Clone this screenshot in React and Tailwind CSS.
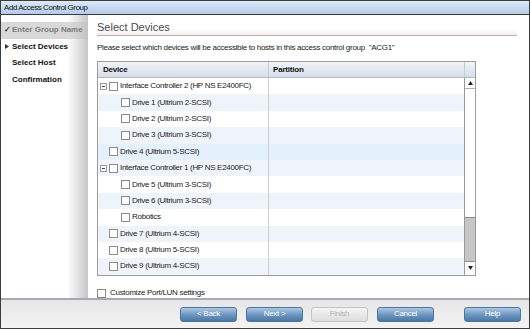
import React from "react";

const rows = [
  { label: "Interface Controller 2 (HP NS E2400FC)", level: 0 },
  { label: "Drive 1 (Ultrium 2-SCSI)", level: 2 },
  { label: "Drive 2 (Ultrium 2-SCSI)", level: 2 },
  { label: "Drive 3 (Ultrium 3-SCSI)", level: 2 },
  { label: "Drive 4 (Ultrium 5-SCSI)", level: 1 },
  { label: "Interface Controller 1 (HP NS E2400FC)", level: 0 },
  { label: "Drive 5 (Ultrium 3-SCSI)", level: 2 },
  { label: "Drive 6 (Ultrium 3-SCSI)", level: 2 },
  { label: "Robotics", level: 2 },
  { label: "Drive 7 (Ultrium 4-SCSI)", level: 1 },
  { label: "Drive 8 (Ultrium 5-SCSI)", level: 1 },
  { label: "Drive 9 (Ultrium 4-SCSI)", level: 1 },
];

function Box() {
  return <span className="inline-block w-[9px] h-[9px] border border-[#8c8c8c] bg-white shrink-0" />;
}

function Expander() {
  return (
    <span className="w-[7px] h-[7px] border border-[#9a9a9a] bg-white shrink-0 flex items-center justify-center mr-[2px]">
      <span className="block w-[3px] h-px bg-[#444]" />
    </span>
  );
}

function Btn({ children, disabled }) {
  return (
    <div
      className={
        disabled
          ? "w-[57px] h-[15px] rounded-[3px] border border-[#c4c4c4] bg-[linear-gradient(#f4f4f4,#dedede)] text-[#b4b4b4] flex items-center justify-center text-[8px] tracking-[-0.3px]"
          : "w-[57px] h-[15px] rounded-[3px] border border-[#4f769f] bg-[linear-gradient(#adc7e2,#6f98c3_50%,#4b77a5)] text-white flex items-center justify-center text-[8px] tracking-[-0.3px]"
      }
    >
      {children}
    </div>
  );
}

export default function App() {
  return (
    <div
      className="w-[530px] h-[329px] border border-[#3c3c3c] flex flex-col bg-white overflow-hidden text-[#111]"
      style={{ fontFamily: '"Liberation Sans", Arial, sans-serif' }}
    >
      <div className="h-[14px] shrink-0 border-b border-[#3a3a3a] bg-[linear-gradient(#dde9f7,#b3cce8)] flex items-center pl-[3px] text-[8px] tracking-[-0.45px] leading-none">
        Add Access Control Group
      </div>
      <div className="flex flex-1 min-h-0">
        <div className="w-[87px] shrink-0 bg-[linear-gradient(to_right,#ffffff_76%,#c6c6c6)] pt-[7px] flex flex-col text-[8px] font-bold leading-none">
          <div className="h-[16.5px] flex items-center bg-[linear-gradient(to_right,#d8d8d8_80%,#c4c4c4)] text-[#7c7c7c]">
            <span className="w-[11px] pl-[3px] text-[8px] text-[#333]">✓</span>
            Enter Group Name
          </div>
          <div className="h-[16.5px] flex items-center">
            <span className="w-[11px] pl-[4px] flex items-center">
              <svg width="4" height="5" viewBox="0 0 4 5"><path d="M0 0L4 2.5L0 5Z" fill="#333" /></svg>
            </span>
            Select Devices
          </div>
          <div className="h-[16.5px] flex items-center pl-[11px]">Select Host</div>
          <div className="h-[16.5px] flex items-center pl-[11px]">Confirmation</div>
        </div>
        <div className="flex-1 pl-[9px] pr-[12px] flex flex-col">
          <div className="mt-[6px] h-[15px] border-b border-[#b4b4b4] bg-[linear-gradient(#ffffff_60%,#f6eaea)] text-[11px] leading-[13px] text-[#4a4a4a]">
            Select Devices
          </div>
          <div className="mt-[7px] text-[8px] leading-[10px] tracking-[-0.3px] text-[#222]">
            Please select which devices will be accessible to hosts in this access control group &nbsp;"ACG1"
          </div>
          <div className="mt-[8px] w-[379px] border border-[#9c9c9c] flex flex-col">
            <div className="h-[16px] flex border-b border-[#b0b8c4] bg-[linear-gradient(#f1f4f9,#d6deea)] text-[8px] font-bold tracking-[-0.2px]">
              <div className="w-[171px] border-r border-[#c4cad4] flex items-center pl-[5px]">Device</div>
              <div className="flex-1 border-r border-[#c4cad4] flex items-center pl-[4px]">Partition</div>
              <div className="w-[10px]" />
            </div>
            <div className="flex">
              <div className="flex-1 flex flex-col">
                {rows.map((r, i) => (
                  <div
                    key={i}
                    className={
                      "h-[16.4px] flex " +
                      (i === 4 ? "bg-[#e4f0fc]" : i % 2 === 1 ? "bg-[#eff4fb]" : "bg-white")
                    }
                  >
                    <div
                      className={
                        "w-[171px] border-r border-[#cfcfcf] flex items-center text-[8px] tracking-[-0.3px] text-[#222] " +
                        (r.level === 0 ? "pl-[2px]" : r.level === 1 ? "pl-[11px]" : "pl-[23px]")
                      }
                    >
                      {r.level === 0 && <Expander />}
                      <Box />
                      <span className="ml-[2px] whitespace-nowrap">{r.label}</span>
                    </div>
                    <div className="flex-1" />
                  </div>
                ))}
              </div>
              <div className="w-[11px] border-l border-[#9a9a9a] flex flex-col bg-white">
                <div className="h-[11px] border-b border-[#b0b0b0] flex items-center justify-center">
                  <svg width="5" height="4" viewBox="0 0 5 4"><path d="M2.5 0L5 4H0Z" fill="#222" /></svg>
                </div>
                <div className="flex-1" />
                <div className="h-[45px] bg-[#c6c6c6] border-y border-[#8e8e8e]" />
                <div className="h-[13px] flex items-center justify-center">
                  <svg width="5" height="4" viewBox="0 0 5 4"><path d="M0 0H5L2.5 4Z" fill="#222" /></svg>
                </div>
              </div>
            </div>
          </div>
          <div className="mt-[13px] flex items-center">
            <Box />
            <span className="ml-[4px] text-[8px] tracking-[-0.3px] leading-none text-[#222]">Customize Port/LUN settings</span>
          </div>
        </div>
      </div>
      <div className="h-[30px] shrink-0 border-t-2 border-[#a4abb2] bg-[linear-gradient(#e6e6e6,#f3f3f3)] flex items-center pl-[179px] pr-[8px]">
        <Btn>&lt; Back</Btn>
        <div className="w-[9px]" />
        <Btn>Next &gt;</Btn>
        <div className="w-[8px]" />
        <Btn disabled>Finish</Btn>
        <div className="w-[9px]" />
        <Btn>Cancel</Btn>
        <div className="flex-1" />
        <Btn>Help</Btn>
      </div>
    </div>
  );
}
